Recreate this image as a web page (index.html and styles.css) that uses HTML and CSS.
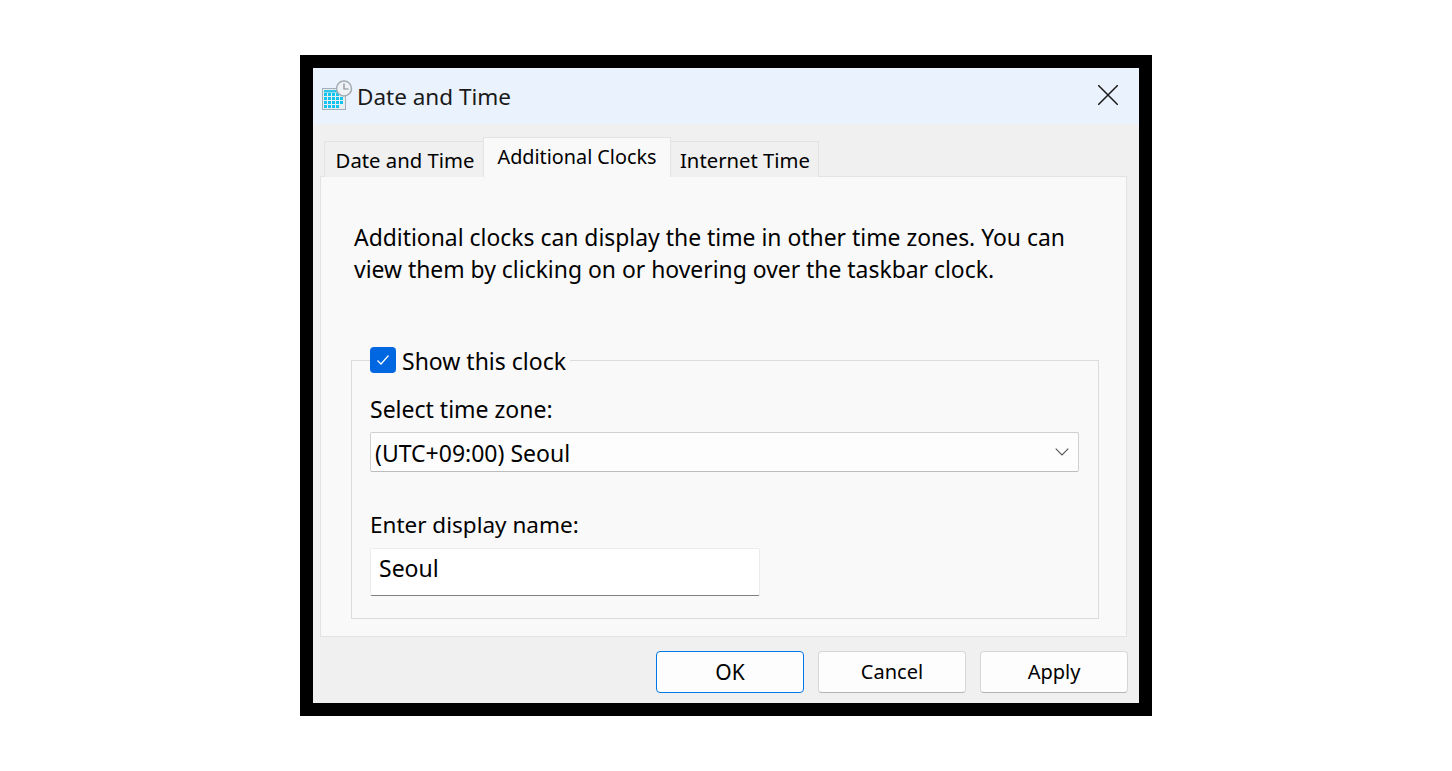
FILE: index.html
```html
<!DOCTYPE html>
<html lang="en">
<head>
<meta charset="utf-8">
<title>Date and Time</title>
<link rel="stylesheet" href="styles.css">
</head>
<body>
<div class="frame">
  <div class="dialog">
    <header class="titlebar">
      <svg class="app-icon" width="32" height="32" viewBox="0 0 32 32">
        <rect x="1.500" y="8.500" width="23" height="21" fill="#e6eef2" stroke="#9fb0b8"/>
        <rect x="3" y="10" width="20" height="2.500" fill="#2cc6e8"/>
        <g fill="#12c4ee">
          <rect x="3" y="13" width="3" height="3"/><rect x="7" y="13" width="3" height="3"/><rect x="11" y="13" width="3" height="3"/><rect x="15" y="13" width="3" height="3"/><rect x="19" y="13" width="3" height="3"/>
          <rect x="3" y="17" width="3" height="3"/><rect x="7" y="17" width="3" height="3"/><rect x="11" y="17" width="3" height="3"/><rect x="15" y="17" width="3" height="3"/><rect x="19" y="17" width="3" height="3"/>
          <rect x="3" y="21" width="3" height="3"/><rect x="7" y="21" width="3" height="3"/><rect x="11" y="21" width="3" height="3"/><rect x="15" y="21" width="3" height="3"/><rect x="19" y="21" width="3" height="3"/>
          <rect x="3" y="25" width="3" height="3"/><rect x="7" y="25" width="3" height="3"/><rect x="11" y="25" width="3" height="3"/><rect x="15" y="25" width="3" height="3"/>
        </g>
        <circle cx="23" cy="8.500" r="7.500" fill="#eef2f4" stroke="#a4aeb4" stroke-width="1.600"/>
        <path d="M23 3.500v5.500h4.500" fill="none" stroke="#7c8a92" stroke-width="1.200"/>
      </svg>
      <h1 class="title">Date and Time</h1>
      <svg class="close" width="20" height="20" viewBox="0 0 20 20">
        <path d="M0 0 20 20M20 0 0 20" stroke="#1a1a1a" stroke-width="1.500" fill="none"/>
      </svg>
    </header>
    <div class="content">
      <nav class="tabs">
        <div class="tab tab-first">Date and Time</div>
        <div class="tab tab-active">Additional Clocks</div>
        <div class="tab tab-last">Internet Time</div>
      </nav>
      <main class="panel">
        <p class="intro">Additional clocks can display the time in other time zones. You can<br>view them by clicking on or hovering over the taskbar clock.</p>
        <fieldset class="group">
          <legend class="legend">
            <span class="checkbox">
              <svg width="14" height="12" viewBox="0 0 14 12"><path d="M1.500 6.500 5 10l7.500-8.500" fill="none" stroke="#fff" stroke-width="1.200"/></svg>
            </span>
            <span class="legend-text">Show this clock</span>
          </legend>
          <div class="label label-zone">Select time zone:</div>
          <div class="select">
            <span class="select-text">(UTC+09:00) Seoul</span>
            <svg width="14" height="8" viewBox="0 0 14 8"><path d="M.7.700 7 7l6.300-6.300" fill="none" stroke="#555" stroke-width="1.100"/></svg>
          </div>
          <div class="label label-name">Enter display name:</div>
          <div class="input">Seoul</div>
        </fieldset>
      </main>
      <footer class="actions">
        <div class="btn btn-default">OK</div>
        <div class="btn">Cancel</div>
        <div class="btn">Apply</div>
      </footer>
    </div>
  </div>
</div>
</body>
</html>
```

FILE: styles.css
```css
* { box-sizing: border-box; }
html, body { height: 100%; }
body {
  margin: 0;
  background: #fff;
  display: flex;
  align-items: center;
  justify-content: center;
  font-family: "Noto Sans", "Open Sans", sans-serif;
  color: #000;
}
.frame {
  width: 852px;
  height: 661px;
  background: #000;
  padding: 13px;
}
.dialog {
  height: 635px;
  background: #f0f0f0;
  display: flex;
  flex-direction: column;
}
.titlebar {
  height: 56px;
  flex: none;
  background: #eaf3fd;
  display: flex;
  align-items: center;
  padding: 0 21px 0 8px;
}
.app-icon { flex: none; }
.title {
  margin: 0 0 0 4px;
  font-size: 22.500px;
  font-weight: 400;
  color: #1a1a1a;
  flex: 1;
}
.close { flex: none; margin-top: -2px; }
.content {
  flex: 1;
  display: flex;
  flex-direction: column;
  padding: 0 12px 0 7px;
}
.tabs {
  height: 53px;
  flex: none;
  display: flex;
  align-items: flex-end;
  padding-left: 4px;
  margin-bottom: -1px;
  position: relative;
}
.tab {
  height: 36px;
  border: 1px solid #e3e3e3;
  border-bottom: 0;
  background: #f0f0f0;
  font-size: 20.300px;
  line-height: 36px;
  text-align: center;
}
.tab-first { width: 159px; border-right: 0; padding-left: 2px; }
.tab-active {
  width: 188px;
  height: 40px;
  background: #f9f9f9;
  font-size: 19.800px;
  line-height: 38px;
  position: relative;
  z-index: 1;
}
.tab-last { width: 148px; border-left: 0; padding-left: 1px; }
.panel {
  height: 461px;
  flex: none;
  background: #f9f9f9;
  border: 1px solid #e3e3e3;
  padding: 45px 0 0 30px;
}
.intro {
  margin: 0;
  font-size: 22.900px;
  line-height: 32px;
  height: 125px;
  white-space: nowrap;
  padding-left: 3px;
}
.group {
  margin: 0;
  height: 272px;
  border: 1px solid #dcdcdc;
  padding: 0 18px;
  min-width: 0;
  width: 748px;
}
.legend {
  padding: 0 4px 0 0;
  margin-left: 0;
  display: flex;
  align-items: center;
  gap: 6px;
  font-size: 23px;
  line-height: 26px;
  height: 26px;
}
.legend-text { padding-top: 2px; }
.checkbox {
  width: 26px;
  height: 26px;
  background: #0067e0;
  border-radius: 4px;
  display: flex;
  align-items: center;
  justify-content: center;
}
.label {
  font-size: 23px;
  line-height: 30px;
}
.label-zone { margin-top: 21px; }
.select {
  margin-top: 8px;
  height: 40px;
  width: 709px;
  background: #fdfdfd;
  border: 1px solid #d0d0d0;
  border-bottom-color: #bdbdbd;
  border-radius: 2px;
  display: flex;
  align-items: center;
  justify-content: space-between;
  padding: 0 9px 0 3px;
  font-size: 23px;
}
.select-text { padding-top: 2px; padding-left: 1px; }
.label-name { margin-top: 38px; font-size: 22.500px; }
.input {
  margin-top: 8px;
  width: 390px;
  height: 48px;
  background: #fff;
  border: 1px solid #ececec;
  border-bottom: 1px solid #808080;
  border-radius: 2px;
  font-size: 23px;
  line-height: 38px;
  padding-left: 8px;
}
.actions {
  flex: 1;
  display: flex;
  justify-content: flex-end;
  align-items: flex-start;
  gap: 14px;
  padding-top: 14px;
  margin-right: -1px;
}
.btn {
  width: 148px;
  height: 42px;
  background: #fdfdfd;
  border: 1px solid #d6d6d6;
  border-bottom-color: #b4b4b4;
  border-radius: 4px;
  font-size: 20px;
  line-height: 40px;
  text-align: center;
}
.btn-default { border: 1px solid #0078e6; font-size: 21px; }
```
